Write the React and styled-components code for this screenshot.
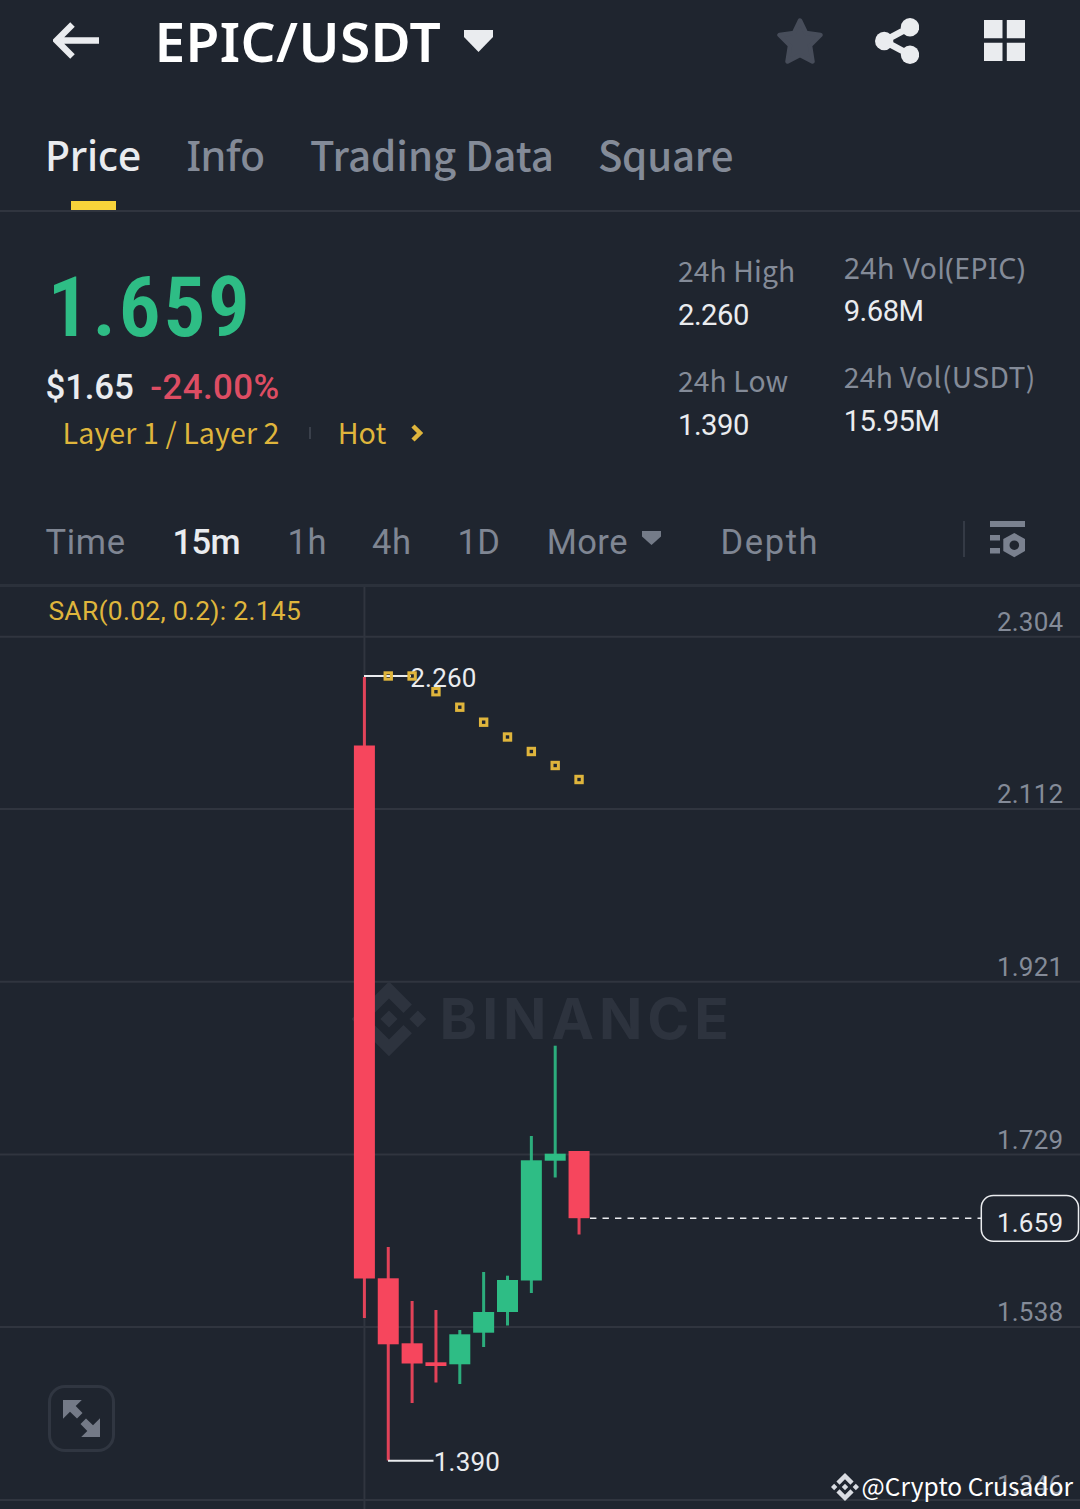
import React, { useState } from "react";
import styled, { createGlobalStyle } from "styled-components";

const DIN = `Roboto, "Liberation Sans", sans-serif`;
const PLEX = `"Noto Sans CJK SC", "Open Sans", sans-serif`;
const SLAB_I = `"Noto Sans", "Open Sans", sans-serif`;

const colors = {
  bg: "#1f252f",
  line: "#30353f",
  white: "#eaecef",
  grey: "#848b98",
  green: "#2ebd85",
  red: "#f6465d",
  yellow: "#dfb53c",
};

const TABS = [
  { label: "Price", font: SLAB_I, size: 41.2, spacing: -0.3, lineHeight: 62 },
  { label: "Info", font: SLAB_I, size: 41.2, spacing: -0.5, lineHeight: 62 },
  { label: "Trading Data", font: PLEX, size: 40.2, spacing: 0, lineHeight: 59 },
  { label: "Square", font: PLEX, size: 40.2, spacing: -0.2, lineHeight: 59 },
];

const STATS = [
  [
    { label: "24h High", value: "2.260", spacing: 0.1 },
    { label: "24h Low", value: "1.390", spacing: 0.1 },
  ],
  [
    { label: "24h Vol(EPIC)", value: "9.68M", spacing: 0.5, slab: true },
    { label: "24h Vol(USDT)", value: "15.95M", spacing: 0.33 },
  ],
];

const INTERVALS = [
  { label: "Time", spacing: 0.7 },
  { label: "15m", spacing: -0.6 },
  { label: "1h", spacing: 0.6 },
  { label: "4h", spacing: 0.8 },
  { label: "1D", spacing: 0.6 },
  { label: "More", spacing: 0.4, caret: true },
  { label: "Depth", spacing: 1.6 },
];

const GRID = [
  { y: 636.7, label: "2.304" },
  { y: 809, label: "2.112" },
  { y: 981.8, label: "1.921" },
  { y: 1154.6, label: "1.729" },
  { y: 1327.1, label: "1.538" },
  { y: 1500, label: "1.346" },
];

// high / open-close box / low, already in chart pixels
const CANDLES = [
  { up: false, high: 677, top: 745.5, bottom: 1278.5, low: 1318 },
  { up: false, high: 1247, top: 1278.3, bottom: 1344.3, low: 1460.5 },
  { up: false, high: 1301, top: 1343.3, bottom: 1363.5, low: 1403 },
  { up: false, high: 1310, top: 1362.3, bottom: 1366, low: 1382.5 },
  { up: true, high: 1330, top: 1334.3, bottom: 1364.3, low: 1384 },
  { up: true, high: 1272, top: 1312, bottom: 1332.7, low: 1347 },
  { up: true, high: 1275.7, top: 1280, bottom: 1312, low: 1325.5 },
  { up: true, high: 1136, top: 1160.3, bottom: 1280.5, low: 1293 },
  { up: true, high: 1045.7, top: 1153.7, bottom: 1160.7, low: 1177.5 },
  { up: false, high: 1151, top: 1151, bottom: 1218.2, low: 1234.5 },
];

const SAR = [676, 676, 691.7, 707.2, 722.2, 737, 751.5, 765.5, 779.5];

const candleX = (i) => 364.4 + i * 23.85;

function BinanceMark() {
  return (
    <path d="M38.73 53.2 63.32 28.62 87.92 53.22 102.22 38.91 63.32 0 24.42 38.9zM0 63.31 14.3 49 28.61 63.31 14.3 77.62zM38.73 73.41 63.32 98 87.92 73.4 102.23 87.69 63.33 126.6 24.42 87.72zM98 63.31 112.3 49 126.61 63.3 112.3 77.62zM77.83 63.3 63.32 48.78 48.81 63.28 63.32 77.78z" />
  );
}

function Candle({ index, up, high, top, bottom, low }) {
  const x = candleX(index);
  const fill = up ? colors.green : colors.red;
  return (
    <g fill={fill}>
      <rect x={x - 1.5} y={high} width="3" height={low - high} opacity="0.9" />
      <rect x={x - 10.5} y={top} width="21" height={bottom - top} />
    </g>
  );
}

function Chart() {
  return (
    <ChartSvg viewBox="0 587 1080 922">
      <g stroke={colors.line} strokeWidth="2">
        {GRID.map(({ y }) => (
          <line key={y} x1="0" x2="1080" y1={y} y2={y} />
        ))}
        <line x1="364.4" x2="364.4" y1="587" y2="1509" />
      </g>

      <g fill="#2d333e">
        <g transform="translate(351.6 981.6) scale(0.59)">
          <BinanceMark />
        </g>
        <Wordmark x="439.6" y="1039.3">
          BINANCE
        </Wordmark>
      </g>

      {GRID.map(({ y, label }) => (
        <AxisLabel key={label} x="997" y={y - 5.8}>
          {label}
        </AxisLabel>
      ))}

      {CANDLES.map((candle, i) => (
        <Candle key={i} index={i} {...candle} />
      ))}

      <g stroke={colors.white} strokeWidth="2">
        <line x1="364" x2="411" y1="676" y2="676" />
        <line x1="388" x2="433.5" y1="1460.7" y2="1460.7" />
        <line x1="590" x2="981" y1="1218.2" y2="1218.2" strokeWidth="1.6" strokeDasharray="6.4 6.1" />
      </g>
      <Callout x="410.3" y="686.7">2.260</Callout>
      <Callout x="433.8" y="1471">1.390</Callout>

      <g fill="none" stroke={colors.yellow} strokeWidth="3">
        {SAR.map((y, i) => (
          <rect key={i} x={candleX(i + 1) - 3.2} y={y - 3.2} width="6.4" height="6.4" />
        ))}
      </g>

      <rect x="981.3" y="1195.5" width="97.2" height="45.7" rx="12" fill={colors.bg} stroke={colors.white} strokeWidth="1.5" />
      <Callout x="997" y="1231.8">1.659</Callout>

      <Indicator x="48.4" y="620">SAR(0.02, 0.2): 2.145</Indicator>
    </ChartSvg>
  );
}

export default function App() {
  const [tab, setTab] = useState("Price");
  const [interval, setInterval] = useState("15m");

  return (
    <Screen>
      <GlobalStyle />

      <Header>
        <BackIcon viewBox="0 0 46 38">
          <path d="M19.5 2.5 3.5 18.5l16 16M3.5 18.5H46" fill="none" stroke={colors.white} strokeWidth="6.4" />
        </BackIcon>
        <Pair>EPIC/USDT</Pair>
        <PairCaret viewBox="0 0 29 22">
          <path d="M0 0h29v7L14.5 22 0 7z" fill={colors.white} />
        </PairCaret>
        <Actions>
          <svg width="46" height="46" viewBox="0 0 46 46">
            <path
              d="M23 2.5 29 15 43.5 17 33 27.5 35.5 43.5 23 37 10.5 43.5 13 27.5 2.5 17 17 15z"
              fill="#474d5a"
              stroke="#474d5a"
              strokeWidth="4.5"
              strokeLinejoin="round"
            />
          </svg>
          <svg width="44" height="46" viewBox="0 0 44 46" fill={colors.white}>
            <path d="M35 9.2 9 23l26 13.8" fill="none" stroke={colors.white} strokeWidth="6.6" />
            <circle cx="35" cy="9.2" r="9.2" />
            <circle cx="9.2" cy="23" r="9.2" />
            <circle cx="35" cy="36.8" r="9.2" />
          </svg>
          <svg width="41" height="41" viewBox="0 0 41 41" fill={colors.white}>
            <path d="M0 0h18.5v18.3H0zM22.8 0H41v18.3H22.8zM0 22.7h18.5V41H0zM22.8 22.7H41V41H22.8z" />
          </svg>
        </Actions>
      </Header>

      <Tabs>
        {TABS.map((t) => (
          <Tab key={t.label} $active={t.label === tab} onClick={() => setTab(t.label)}>
            <TabLabel $font={t.font} $size={t.size} $spacing={t.spacing} $lineHeight={t.lineHeight}>
              {t.label}
            </TabLabel>
            {t.label === tab && <TabMarker />}
          </Tab>
        ))}
      </Tabs>

      <Ticker>
        <Quote>
          <LastPrice>1.659</LastPrice>
          <SubPrice>
            <Fiat>$1.65</Fiat>
            <Change>-24.00%</Change>
          </SubPrice>
          <Tags>
            <Tag>Layer 1 / Layer 2</Tag>
            <TagDivider />
            <Tag>Hot</Tag>
            <svg width="12" height="18" viewBox="0 0 12 18">
              <path d="M2 2l7 7-7 7" fill="none" stroke={colors.yellow} strokeWidth="4.5" />
            </svg>
          </Tags>
        </Quote>
        {STATS.map((column, i) => (
          <StatColumn key={i} $top={i === 0 ? 37.5 : 34}>
            {column.map((s) => (
              <Stat key={s.label}>
                <StatLabel $slab={s.slab} $spacing={s.spacing}>
                  {s.label}
                </StatLabel>
                <StatValue>{s.value}</StatValue>
              </Stat>
            ))}
          </StatColumn>
        ))}
      </Ticker>

      <IntervalBar>
        {INTERVALS.map((item) => (
          <Interval
            key={item.label}
            $active={item.label === interval}
            $spacing={item.spacing}
            onClick={() => setInterval(item.label)}
          >
            {item.label}
            {item.caret && (
              <MoreCaret viewBox="0 0 19 14">
                <path d="M0 0h19v5.5L9.5 14 0 5.5z" fill="#747b88" />
              </MoreCaret>
            )}
          </Interval>
        ))}
        <BarDivider />
        <svg width="36" height="37" viewBox="0 0 36 37" fill="#7a818f">
          <path d="M0 0h35v6H0zM0 14h10v5.5H0zM0 27h10v5.5H0z" />
          <path
            fillRule="evenodd"
            d="M24.3 12 35 18v12l-10.7 6.3L13.3 30V18zM24.3 19.4a4.8 4.8 0 1 0 0 9.6 4.8 4.8 0 0 0 0-9.6z"
          />
        </svg>
      </IntervalBar>

      <ChartArea>
        <Chart />
        <ExpandButton>
          <svg width="37" height="37" viewBox="0 0 37 37" fill="#747a87">
            <path d="M0 0h18.8l-6.1 6 6.8 7-5.5 5.5-7-6.8-7 7z" />
            <path d="M37 37H18.2l6.1-6-6.8-7 5.5-5.5 7 6.8 7-7z" />
          </svg>
        </ExpandButton>
        <Credit>
          <svg width="28" height="28" viewBox="0 0 126.61 126.61" fill="#d9dce2">
            <BinanceMark />
          </svg>
          <CreditName>@Crypto Crusador</CreditName>
        </Credit>
      </ChartArea>
    </Screen>
  );
}

const GlobalStyle = createGlobalStyle`
  * {
    box-sizing: border-box;
  }

  body {
    margin: 0;
    background: ${colors.bg};
  }

  svg {
    display: block;
    flex: none;
  }
`;

const Screen = styled.div`
  width: 1080px;
  height: 1509px;
  overflow: hidden;
  display: flex;
  flex-direction: column;
  background: ${colors.bg};
  color: ${colors.white};
  font-family: ${DIN};
  white-space: nowrap;
`;

const Header = styled.header`
  flex: none;
  height: 81px;
  padding: 0 55px 0 52.5px;
  display: flex;
  align-items: center;
`;

const BackIcon = styled.svg`
  width: 46px;
  height: 38px;
`;

const Pair = styled.h1`
  width: 309.5px;
  margin: 0 0 0 56px;
  color: #fff;
  font-family: ${SLAB_I};
  font-size: 55px;
  font-weight: 650;
  letter-spacing: 0.4px;
  line-height: 84px;
`;

const PairCaret = styled.svg`
  width: 29px;
  height: 22px;
`;

const Actions = styled.div`
  margin-left: auto;
  display: flex;
  align-items: center;

  svg + svg {
    margin-left: 52px;
  }

  svg:last-child {
    margin-left: 65px;
  }
`;

const Tabs = styled.nav`
  flex: none;
  height: 131px;
  padding: 43px 0 0 45px;
  display: grid;
  grid-template-columns: 141.5px 123.6px 287.8px auto;
  border-bottom: 2px solid ${colors.line};
`;

const Tab = styled.div`
  justify-self: start;
  display: flex;
  flex-direction: column;
  align-items: center;
  color: ${({ $active }) => ($active ? colors.white : colors.grey)};
`;

const TabLabel = styled.span`
  font-family: ${({ $font }) => $font};
  font-size: ${({ $size }) => $size}px;
  font-weight: 500;
  letter-spacing: ${({ $spacing }) => $spacing}px;
  line-height: ${({ $lineHeight }) => $lineHeight}px;
`;

const TabMarker = styled.span`
  width: 45px;
  height: 9px;
  margin-top: auto;
  background: #f8d33a;
`;

const Ticker = styled.section`
  flex: none;
  height: 288px;
  display: grid;
  grid-template-columns: 678px 165.7px auto;
`;

const Quote = styled.div`
  padding: 44.5px 0 0 45.6px;
`;

const LastPrice = styled.div`
  padding-left: 2px;
  color: ${colors.green};
  font-family: "Roboto Condensed", ${DIN};
  font-size: 84px;
  font-weight: 650;
  letter-spacing: 2.4px;
  line-height: 101px;
  height: 100px;
`;

const SubPrice = styled.div`
  display: grid;
  grid-template-columns: 104.7px auto;
  font-size: 34.9px;
  font-weight: 500;
  line-height: 61px;
`;

const Fiat = styled.span`
  letter-spacing: -0.2px;
`;

const Change = styled.span`
  color: #dd4d63;
  letter-spacing: 0.4px;
`;

const Tags = styled.div`
  height: 30px;
  padding-left: 17px;
  display: grid;
  grid-template-columns: 246.3px 28.8px 73.5px auto;
  align-items: center;
`;

const Tag = styled.span`
  margin-top: -1px;
  color: ${colors.yellow};
  font-family: ${PLEX};
  font-size: 28.6px;
  letter-spacing: 0.1px;
  line-height: 28px;
`;

const TagDivider = styled.span`
  width: 2px;
  height: 12px;
  background: #3a404b;
`;

const StatColumn = styled.div`
  padding-top: ${({ $top }) => $top}px;
`;

const Stat = styled.div`
  height: 110px;
`;

const StatLabel = styled.div`
  height: 40px;
  color: ${colors.grey};
  font-family: ${({ $slab }) => ($slab ? SLAB_I : PLEX)};
  font-size: 28.3px;
  letter-spacing: ${({ $spacing }) => $spacing}px;
  line-height: ${({ $slab }) => ($slab ? 45 : 40)}px;
`;

const StatValue = styled.div`
  font-size: 29.2px;
  letter-spacing: -0.5px;
  line-height: 50px;
`;

const IntervalBar = styled.div`
  flex: none;
  height: 87px;
  padding-left: 45.4px;
  display: grid;
  grid-template-columns: 127.2px 115px 84.3px 85.5px 89.4px 173.8px 242.3px 27px auto;
  align-items: center;
  border-bottom: 3px solid #2b313b;
`;

const Interval = styled.span`
  display: flex;
  align-items: center;
  color: ${({ $active }) => ($active ? colors.white : "#7f8693")};
  font-size: 34.5px;
  font-weight: ${({ $active }) => ($active ? 500 : 400)};
  letter-spacing: ${({ $spacing }) => $spacing}px;
`;

const MoreCaret = styled.svg`
  width: 19px;
  height: 14px;
  margin: 0 0 8px 14px;
`;

const BarDivider = styled.span`
  width: 2.5px;
  height: 36px;
  margin-bottom: 6px;
  background: #343a45;

  & + svg {
    margin-bottom: 5px;
  }
`;

const ChartArea = styled.main`
  position: relative;
  flex: 1;
`;

const ChartSvg = styled.svg`
  width: 1080px;
  height: 922px;
`;

const Wordmark = styled.text`
  font-family: Inter, ${SLAB_I};
  font-size: 57px;
  font-weight: 700;
  letter-spacing: 4.9px;
`;

const AxisLabel = styled.text`
  fill: ${colors.grey};
  font-family: ${DIN};
  font-size: 26px;
  letter-spacing: 0.19px;
`;

const Callout = styled(AxisLabel)`
  fill: ${colors.white};
`;

const Indicator = styled(AxisLabel)`
  fill: ${colors.yellow};
  font-size: 26.4px;
  letter-spacing: 0.3px;
`;

const ExpandButton = styled.div`
  position: absolute;
  left: 48px;
  bottom: 57.5px;
  width: 67px;
  height: 67px;
  display: flex;
  align-items: center;
  justify-content: center;
  border: 3px solid #303641;
  border-radius: 17px;
`;

const Credit = styled.div`
  position: absolute;
  right: 6.8px;
  bottom: 7.5px;
  display: flex;
  align-items: center;
  gap: 3px;
`;

const CreditName = styled.span`
  margin-top: -3px;
  color: #fff;
  font-family: ${PLEX};
  font-size: 24.5px;
  letter-spacing: 0.07px;
  line-height: 33px;
`;
